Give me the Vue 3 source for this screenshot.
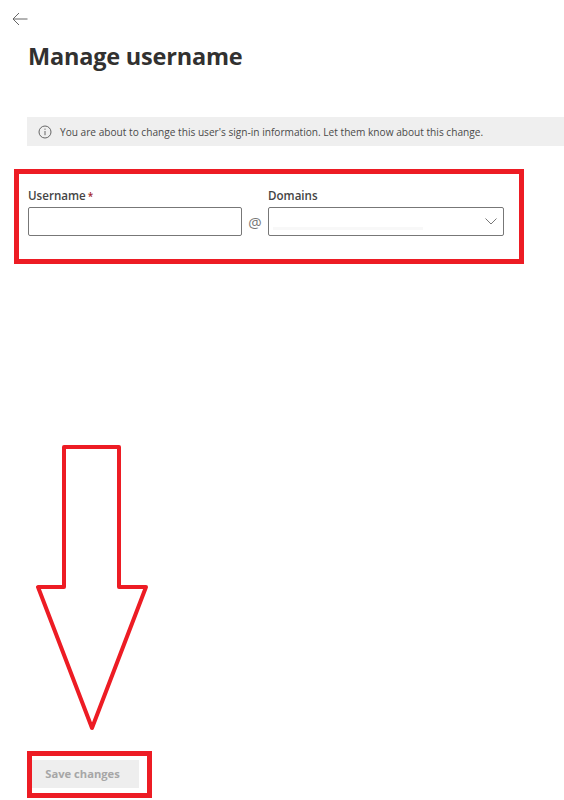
<template>
  <main class="page">
    <button class="back" aria-label="Back">
      <svg width="16" height="14" viewBox="0 0 16 14">
        <path d="M15.5 7H1M7 1 1 7l6 6" fill="none" stroke="#666" stroke-width="1" />
      </svg>
    </button>

    <h1>Manage username</h1>

    <div class="notice">
      <svg width="14" height="14" viewBox="0 0 14 14">
        <circle cx="7" cy="7" r="6" fill="none" stroke="#666" stroke-width="1" />
        <path d="M7 6v4.2M7 3.6v1.2" fill="none" stroke="#666" stroke-width="1" />
      </svg>
      <span>You are about to change this user's sign-in information. Let them know about this change.</span>
    </div>

    <form class="fields" @submit.prevent>
      <div class="field username">
        <label for="username">Username <em>*</em></label>
        <input id="username" v-model="username" type="text" />
      </div>
      <span class="at">@</span>
      <div class="field domains">
        <label for="domain">Domains</label>
        <div id="domain" class="select">
          <span class="faint"></span>
          <svg width="12" height="7" viewBox="0 0 12 7">
            <path d="M.5.5 6 6l5.5-5.5" fill="none" stroke="#777" stroke-width="1" />
          </svg>
        </div>
      </div>
    </form>

    <svg class="arrow" width="116" height="290" viewBox="0 0 116 290">
      <path
        d="M30 2H85V142H112L58 283 4 142H30Z"
        fill="none"
        stroke="#ed1c24"
        stroke-width="4"
        stroke-linejoin="round"
      />
    </svg>

    <div class="save">
      <button disabled>Save changes</button>
    </div>
  </main>
</template>

<script setup>
import { ref } from 'vue'

const username = ref('')
</script>

<style>
html,
body {
  margin: 0;
  background: #fff;
}
</style>

<style scoped>
.page {
  height: 800px;
  overflow: hidden;
  box-sizing: border-box;
  padding-top: 12px;
  font-family: "Open Sans", "Liberation Sans", sans-serif;
  color: #323130;
}

.back {
  display: block;
  margin-left: 12px;
  padding: 0;
  height: 14px;
  border: 0;
  background: none;
}

.back svg {
  display: block;
}

h1 {
  margin: 14px 0 0 28px;
  font-size: 23.5px;
  line-height: 32px;
  font-weight: 700;
  letter-spacing: -0.2px;
}

.notice {
  display: flex;
  align-items: center;
  gap: 8px;
  box-sizing: border-box;
  height: 29px;
  margin: 45px 0 0 27px;
  padding-left: 11px;
  background: #efefef;
  font-size: 10.15px;
  color: #4a4a4a;
}

.fields {
  display: flex;
  align-items: flex-end;
  box-sizing: border-box;
  width: 510px;
  height: 95px;
  margin: 23px 0 0 14px;
  padding: 13px 15px 23px 9px;
  border: 5px solid #ed1c24;
}

.field label {
  display: block;
  height: 20px;
  font-size: 11.6px;
  line-height: 18px;
  font-weight: 600;
  color: #444;
}

.field em {
  margin-left: -1px;
  color: #a4262c;
  font-size: 10px;
  font-style: normal;
}

.username {
  width: 214px;
}

.domains {
  width: 236px;
}

input,
.select {
  display: block;
  box-sizing: border-box;
  width: 100%;
  height: 29px;
  border: 1px solid #777;
  border-radius: 2px;
  background: #fff;
}

.select {
  display: flex;
  align-items: center;
  justify-content: space-between;
  padding: 0 6px 0 4px;
}

.faint {
  width: 150px;
  height: 3px;
  margin-top: 13px;
  background: #f8f8f8;
}

.at {
  width: 26px;
  height: 29px;
  line-height: 31px;
  text-align: center;
  font-size: 15px;
  color: #777;
}

.arrow {
  display: block;
  margin: 181px 0 0 34px;
}

.save {
  box-sizing: border-box;
  width: 125px;
  height: 47px;
  margin: 16px 0 0 27px;
  padding: 4px 8px 5px 0;
  border: 5px solid #ed1c24;
}

.save button {
  display: block;
  width: 107px;
  height: 28px;
  padding: 0 6px 1px 0;
  border: 0;
  background: #eee;
  color: #a6a6a6;
  font-family: inherit;
  font-size: 11.2px;
  font-weight: 700;
}
</style>
